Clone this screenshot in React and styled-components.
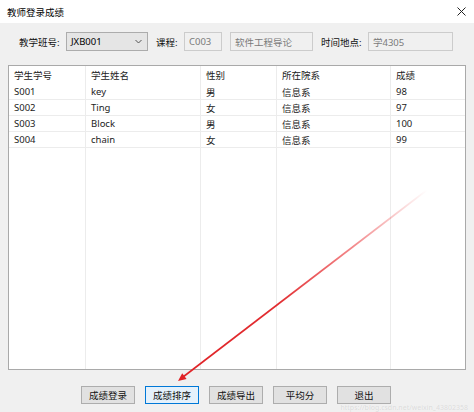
import React from 'react';
import styled, { createGlobalStyle } from 'styled-components';

const GlobalStyle = createGlobalStyle`
  html, body {
    margin: 0;
    padding: 0;
    background: #f0f0f0;
  }
  body {
    font-family: "Noto Sans", "Noto Sans CJK SC", sans-serif;
  }
`;

const Window = styled.div`
  position: relative;
  width: 474px;
  height: 412px;
  display: flex;
  flex-direction: column;
  background: #f0f0f0;
  overflow: hidden;
  font-size: 9.5px;
  color: #1a1a1a;
`;

const TitleBar = styled.div`
  height: 23px;
  display: flex;
  align-items: center;
  justify-content: space-between;
  padding: 0 8px 0 7px;
  background: #ffffff;
  box-sizing: border-box;
`;

const Title = styled.span`
  font-size: 9.5px;
  color: #000;
`;

const Body = styled.div`
  flex: 1;
  display: flex;
  flex-direction: column;
  padding: 9px 8px 0 8px;
`;

const Toolbar = styled.div`
  display: flex;
  align-items: center;
  column-gap: 8px;
  height: 19px;
  padding-left: 11px;
`;

const Label = styled.span`
  width: ${(p) => p.$w}px;
  white-space: nowrap;
  color: #111;
  font-size: 9.5px;
`;

const Combo = styled.div`
  width: 82px;
  height: 19px;
  box-sizing: border-box;
  display: flex;
  align-items: center;
  justify-content: space-between;
  padding: 0 5px 0 4px;
  background: #e5e5e5;
  border: 1px solid #acacac;
  color: #000;
`;

const TextBox = styled.div`
  width: ${(p) => p.$w}px;
  height: 19px;
  box-sizing: border-box;
  display: flex;
  align-items: center;
  padding-left: 4px;
  background: #f0f0f0;
  border: 1px solid #cccccc;
  color: #7a7a7a;
  white-space: nowrap;
`;

const Grid = styled.div`
  margin-top: 14px;
  height: 305px;
  box-sizing: border-box;
  display: grid;
  grid-template-columns: 77px 115px 76px 114px 1fr;
  grid-template-rows: 18px repeat(4, 16px) 1fr;
  background: #ffffff;
  border: 1px solid #a9a9a9;
`;

const Cell = styled.div`
  box-sizing: border-box;
  padding-left: 5px;
  display: flex;
  align-items: center;
  white-space: nowrap;
  color: #222;
  border-right: ${(p) => (p.$last ? 'none' : '1px solid #ececec')};
  border-bottom: ${(p) => (p.$line ? '1px solid #ececec' : 'none')};
`;

const Footer = styled.div`
  display: flex;
  column-gap: 10px;
  margin-top: 16px;
  padding-left: 73px;
`;

const Button = styled.div`
  width: 54px;
  height: 18px;
  box-sizing: border-box;
  display: flex;
  align-items: center;
  justify-content: center;
  background: ${(p) => (p.$active ? '#e5f1fb' : '#e1e1e1')};
  border: 1px solid ${(p) => (p.$active ? '#0078d7' : '#adadad')};
  color: #111;
`;

const Watermark = styled.span`
  position: absolute;
  right: 6px;
  bottom: 0;
  font-size: 7px;
  line-height: 8px;
  color: rgba(120, 120, 120, 0.18);
  pointer-events: none;
`;

const Overlay = styled.svg`
  position: absolute;
  left: 0;
  top: 0;
  pointer-events: none;
`;

const columns = ['学生学号', '学生姓名', '性别', '所在院系', '成绩'];
const rows = [
  ['S001', 'key', '男', '信息系', '98'],
  ['S002', 'Ting', '女', '信息系', '97'],
  ['S003', 'Block', '男', '信息系', '100'],
  ['S004', 'chain', '女', '信息系', '99'],
];
const buttons = ['成绩登录', '成绩排序', '成绩导出', '平均分', '退出'];

export default function App() {
  return (
    <>
      <GlobalStyle />
      <Window>
        <TitleBar>
          <Title>教师登录成绩</Title>
          <svg width="9" height="9" viewBox="0 0 9 9">
            <path d="M0.5 0.5 L8.5 8.5 M8.5 0.5 L0.5 8.5" stroke="#222" strokeWidth="1" />
          </svg>
        </TitleBar>
        <Body>
          <Toolbar>
            <Label $w={39}>教学班号:</Label>
            <Combo>
              <span>JXB001</span>
              <svg width="7" height="5" viewBox="0 0 7 5">
                <path d="M0.5 1 L3.5 4 L6.5 1" stroke="#555" fill="none" strokeWidth="1" />
              </svg>
            </Combo>
            <Label $w={20}>课程:</Label>
            <TextBox $w={38}>C003</TextBox>
            <TextBox $w={83}>软件工程导论</TextBox>
            <Label $w={39}>时间地点:</Label>
            <TextBox $w={85}>学4305</TextBox>
          </Toolbar>
          <Grid>
            {columns.map((c, i) => (
              <Cell key={c} $last={i === 4}>{c}</Cell>
            ))}
            {rows.map((r, ri) =>
              r.map((v, ci) => (
                <Cell key={`${ri}-${ci}`} $last={ci === 4} $line>
                  {v}
                </Cell>
              ))
            )}
            {columns.map((c, i) => (
              <Cell key={`f-${c}`} $last={i === 4} />
            ))}
          </Grid>
          <Footer>
            {buttons.map((b, i) => (
              <Button key={b} $active={i === 1}>{b}</Button>
            ))}
          </Footer>
        </Body>
        <Watermark>https://blog.csdn.net/weixin_43802358</Watermark>
        <Overlay width="474" height="412" viewBox="0 0 474 412">
          <defs>
            <linearGradient id="arrowFade" x1="427" y1="190" x2="180" y2="380" gradientUnits="userSpaceOnUse">
              <stop offset="0" stopColor="#e8262a" stopOpacity="0" />
              <stop offset="0.3" stopColor="#e8262a" stopOpacity="0.55" />
              <stop offset="0.6" stopColor="#e02226" stopOpacity="0.95" />
              <stop offset="1" stopColor="#e02226" stopOpacity="1" />
            </linearGradient>
          </defs>
          <line x1="427" y1="190" x2="183" y2="377" stroke="url(#arrowFade)" strokeWidth="1.6" />
          <polygon points="178,381 186.6,378.9 182.2,373.2" fill="#e02226" />
        </Overlay>
      </Window>
    </>
  );
}
